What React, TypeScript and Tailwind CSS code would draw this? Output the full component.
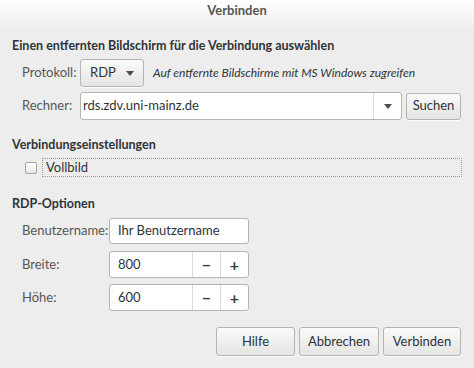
import React from "react";

const FONT = "font-['Lato','Open_Sans',sans-serif]";

function Arrow() {
  return (
    <svg width="8" height="5" viewBox="0 0 8 5" className="block">
      <path d="M0 0 L8 0 L4 5 Z" fill="#4a4d4a" />
    </svg>
  );
}

function Button({ children, className = "" }: { children: React.ReactNode; className?: string }) {
  return (
    <div
      className={`flex items-center justify-center rounded-[3px] border border-[#b4b4b1] bg-gradient-to-b from-[#fafafa] to-[#e4e4e2] text-[13px] text-[#2e3436] shadow-[0_1px_0_rgba(255,255,255,0.8)] ${className}`}
    >
      {children}
    </div>
  );
}

function Heading({ children, className = "" }: { children: React.ReactNode; className?: string }) {
  return <div className={`h-[16px] leading-[16px] text-[12.5px] font-bold text-[#2e3436] ${className}`}>{children}</div>;
}

function SpinRow({ label, value, className = "" }: { label: string; value: string; className?: string }) {
  return (
    <div className={`flex items-center h-[27px] ${className}`}>
      <span className="w-[97px] pl-[10px] text-[13px] text-[#555753]">{label}</span>
      <div className="flex h-full w-[140px] rounded-[3px] border border-[#b4b4b1] bg-white overflow-hidden">
        <div className="flex-1 flex items-center pl-[8px] text-[13px] text-[#2e3436]">{value}</div>
        <div className="w-[28px] flex items-center justify-center border-l border-[#dcdcdc] text-[16px] font-bold text-[#3c3c3c]">−</div>
        <div className="w-[28px] flex items-center justify-center border-l border-[#dcdcdc] text-[16px] font-bold text-[#3c3c3c]">+</div>
      </div>
    </div>
  );
}

export default function App() {
  return (
    <div className={`w-[474px] h-[368px] bg-[#ededed] flex flex-col ${FONT} overflow-hidden`}>
      <div className="h-[30px] bg-gradient-to-b from-white to-[#ededed] flex justify-center">
        <span className="mt-[2px] leading-[16px] text-[13px] font-bold text-[#555753]">Verbinden</span>
      </div>

      <div className="flex flex-col px-[12px]">
        <Heading className="mt-[8px]">Einen entfernten Bildschirm für die Verbindung auswählen</Heading>

        <div className="mt-[5px] flex items-center h-[28px]">
          <span className="w-[68px] pl-[10px] text-[13px] text-[#555753]">Protokoll:</span>
          <Button className="w-[64px] h-full !justify-between pl-[9px] pr-[9px]">
            <span>RDP</span>
            <Arrow />
          </Button>
          <span className="ml-[9px] text-[12px] italic text-[#2e3436]">Auf entfernte Bildschirme mit MS Windows zugreifen</span>
        </div>

        <div className="mt-[5px] flex items-center h-[28px]">
          <span className="w-[68px] pl-[10px] text-[13px] text-[#555753]">Rechner:</span>
          <div className="flex h-full w-[322px] rounded-[3px] border border-[#b4b4b1] bg-white overflow-hidden">
            <div className="flex-1 flex items-center pl-[2px] text-[13px] text-[#2e3436]">rds.zdv.uni-mainz.de</div>
            <div className="w-[28px] flex items-center justify-center border-l border-[#dcdcdc]">
              <Arrow />
            </div>
          </div>
          <Button className="ml-[4px] w-[55px] h-[27px]">Suchen</Button>
        </div>

        <Heading className="mt-[17px]">Verbindungseinstellungen</Heading>

        <div className="mt-[5px] flex items-center h-[19px]">
          <div className="ml-[13px] w-[12px] h-[12px] rounded-[2px] border border-[#a5a5a2] bg-gradient-to-b from-white to-[#e8e8e6]" />
          <div className="ml-[5px] flex-1 h-full flex items-center pl-[3px] border border-dotted border-[#9a9a9a] text-[13px] text-[#2e3436]">
            Vollbild
          </div>
        </div>

        <Heading className="mt-[19px]">RDP-Optionen</Heading>

        <div className="mt-[6px] flex items-center h-[26px]">
          <span className="w-[97px] pl-[10px] text-[13px] text-[#555753]">Benutzername:</span>
          <div className="h-full w-[140px] rounded-[3px] border border-[#b4b4b1] bg-white flex items-center pl-[8px] text-[13px] text-[#2e3436]">
            Ihr Benutzername
          </div>
        </div>

        <SpinRow label="Breite:" value="800" className="mt-[7px]" />
        <SpinRow label="Höhe:" value="600" className="mt-[6px]" />

        <div className="mt-[16px] flex justify-end gap-[4px] pr-[1px]">
          <Button className="w-[79px] h-[29px]">Hilfe</Button>
          <Button className="w-[80px] h-[29px]">Abbrechen</Button>
          <Button className="w-[78px] h-[29px]">Verbinden</Button>
        </div>
      </div>
    </div>
  );
}
